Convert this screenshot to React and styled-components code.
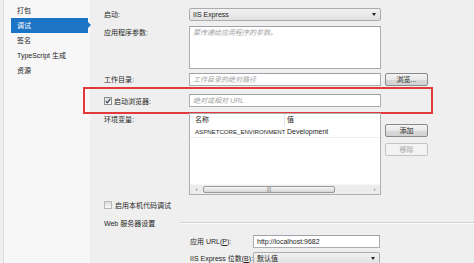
import React from 'react'
import styled, { createGlobalStyle, css } from 'styled-components'

const GlobalStyle = createGlobalStyle`
  html, body {
    margin: 0;
    padding: 0;
  }
  body {
    width: 474px;
    height: 263px;
    overflow: hidden;
    background: #efefef;
    font-family: "Liberation Sans", "Noto Sans CJK SC", sans-serif;
    font-size: 7px;
    color: #1e1e1e;
  }
`

const Window = styled.div`
  display: flex;
  height: 263px;
  background: #efefef;
  overflow: hidden;
`

const Sidebar = styled.nav`
  width: 87px;
  margin-left: 3px;
  box-sizing: border-box;
  border-left: 1px solid #dcdcdc;
  background: #f7f7f7;
  padding-top: 3px;
`

const NavItem = styled.div`
  position: relative;
  height: 15px;
  line-height: 15px;
  width: 77px;
  margin-left: 7px;
  padding-left: 6px;
  box-sizing: border-box;
  white-space: nowrap;
  ${(p) =>
    p.$active &&
    css`
      background: #1c74c6;
      color: #fff;
      &::after {
        content: '';
        position: absolute;
        right: -3px;
        top: 4px;
        border-left: 3px solid #1c74c6;
        border-top: 3px solid transparent;
        border-bottom: 3px solid transparent;
      }
    `}
`

const Main = styled.main`
  flex: 1;
  display: flex;
  flex-direction: column;
  padding: 8px 0 0 14px;
`

const FormRow = styled.div`
  position: relative;
  display: grid;
  grid-template-columns: 85px 192px 47px;
  align-items: start;
  width: 324px;
  margin-top: ${(p) => p.$mt || 0}px;
  ${(p) =>
    p.$marked &&
    css`
      &::after {
        content: '';
        position: absolute;
        left: -21px;
        right: -5px;
        top: -7px;
        bottom: -7px;
        border: 2px solid #e2393c;
        pointer-events: none;
      }
    `}
`

const Label = styled.div`
  line-height: 13px;
  white-space: nowrap;
`

const CheckLabel = styled.label`
  display: flex;
  align-items: center;
  gap: 2px;
  height: 13px;
  white-space: nowrap;
`

const Box = styled.span`
  display: inline-flex;
  align-items: center;
  justify-content: center;
  width: 8px;
  height: 8px;
  box-sizing: border-box;
  border: 1px solid ${(p) => (p.$dim ? '#b8b8b8' : '#8e8f8f')};
  background: linear-gradient(#dcdcdc, #f8f8f8);
`

const Field = styled.div`
  height: ${(p) => p.$h || 13}px;
  box-sizing: border-box;
  border: 1px solid #abadb3;
  border-top-color: #9ea2a8;
  background: #fff;
  padding: 0 3px;
  line-height: 11px;
  white-space: nowrap;
  overflow: hidden;
`

const Hint = styled.span`
  color: #a3a3a3;
  font-style: italic;
`

const Select = styled.div`
  position: relative;
  height: 13px;
  box-sizing: border-box;
  border: 1px solid #acacac;
  border-radius: 2px;
  background: linear-gradient(#f2f2f2, #e0e0e0);
  padding: 0 3px;
  line-height: 11px;
  white-space: nowrap;
  &::after {
    content: '';
    position: absolute;
    right: 4px;
    top: 4px;
    border-top: 3px solid #222;
    border-left: 2px solid transparent;
    border-right: 2px solid transparent;
  }
`

const Button = styled.div`
  height: 13px;
  box-sizing: border-box;
  border: 1px solid ${(p) => (p.$disabled ? '#c2c5c8' : '#8a8a8a')};
  border-radius: 2px;
  background: ${(p) =>
    p.$disabled ? '#f3f3f3' : 'linear-gradient(#f4f4f4 0%, #e8e8e8 50%, #d9d9d9 51%, #d2d2d2 100%)'};
  color: ${(p) => (p.$disabled ? '#a6a6a6' : '#1e1e1e')};
  text-align: center;
  line-height: 11px;
`

const ButtonStack = styled.div`
  display: flex;
  flex-direction: column;
  gap: 6px;
  padding-left: 4px;
  padding-top: ${(p) => p.$top || 0}px;
`

const Table = styled.div`
  height: 82px;
  box-sizing: border-box;
  border: 1px solid #acb0b5;
  background: #fff;
  display: flex;
  flex-direction: column;
`

const TableLine = styled.div`
  display: grid;
  grid-template-columns: 95px 1fr;
  height: ${(p) => p.$h}px;
  line-height: ${(p) => p.$h}px;
  border-bottom: 1px solid ${(p) => (p.$head ? '#ffffff' : '#f0f0f0')};
  white-space: nowrap;
`

const Cell = styled.div`
  padding-left: ${(p) => (p.$first ? 5 : 2)}px;
  border-right: ${(p) => (p.$divider ? '1px solid #e4e4e4' : 'none')};
  font-size: ${(p) => (p.$caps ? 6.1 : 7)}px;
  overflow: hidden;
`

const Scrollbar = styled.div`
  margin-top: auto;
  height: 9px;
  display: flex;
  align-items: center;
  background: #ececec;
  border-top: 1px solid #f6f6f6;
  color: #555;
  font-size: 6px;
`

const Arrow = styled.div`
  width: ${(p) => p.$w}px;
  text-align: center;
  line-height: 9px;
`

const Thumb = styled.div`
  width: 132px;
  height: 7px;
  box-sizing: border-box;
  border: 1px solid #9b9b9b;
  border-radius: 2px;
  background: linear-gradient(#f6f6f6, #d6d6d6);
  display: flex;
  align-items: center;
  justify-content: center;
  font-size: 5px;
  line-height: 5px;
  color: #666;
`

const CheckRow = styled.div`
  display: flex;
  align-items: center;
  gap: 3px;
  height: 10px;
  margin-top: 5px;
  white-space: nowrap;
`

const GroupHeader = styled.div`
  display: grid;
  grid-template-columns: 76px 1fr;
  align-items: center;
  height: 10px;
  margin-top: 8px;
  white-space: nowrap;
`

const Rule = styled.div`
  border-top: 1px solid #d3d3d3;
  border-bottom: 1px solid #fbfbfb;
`

const SubRow = styled.div`
  display: grid;
  grid-template-columns: 63px 127px;
  padding-left: 86px;
  margin-top: ${(p) => p.$mt}px;
`

const Key = styled.u`
  text-decoration: underline;
`

const Check = () => (
  <svg width="6" height="6" viewBox="0 0 6 6">
    <path d="M0.8 3.2 L2.3 4.8 L5.2 0.9" fill="none" stroke="#2a3a4f" strokeWidth="1.1" />
  </svg>
)

const navItems = ['打包', '调试', '签名', 'TypeScript 生成', '资源']

export default function App() {
  return (
    <>
      <GlobalStyle />
      <Window>
        <Sidebar>
          {navItems.map((item) => (
            <NavItem key={item} $active={item === '调试'}>
              {item}
            </NavItem>
          ))}
        </Sidebar>
        <Main>
          <FormRow>
            <Label>启动:</Label>
            <Select>IIS Express</Select>
          </FormRow>
          <FormRow $mt={5}>
            <Label>应用程序参数:</Label>
            <Field $h={43}>
              <Hint>要传递给应用程序的参数。</Hint>
            </Field>
          </FormRow>
          <FormRow $mt={4}>
            <Label>工作目录:</Label>
            <Field>
              <Hint>工作目录的绝对路径</Hint>
            </Field>
            <ButtonStack>
              <Button>浏览...</Button>
            </ButtonStack>
          </FormRow>
          <FormRow $mt={8} $marked>
            <CheckLabel>
              <Box>
                <Check />
              </Box>
              启动浏览器:
            </CheckLabel>
            <Field>
              <Hint>绝对或相对 URL</Hint>
            </Field>
          </FormRow>
          <FormRow $mt={6}>
            <Label>环境变量:</Label>
            <Table>
              <TableLine $h={12} $head>
                <Cell $first $divider>名称</Cell>
                <Cell>值</Cell>
              </TableLine>
              <TableLine $h={10}>
                <Cell $first $caps>ASPNETCORE_ENVIRONMENT</Cell>
                <Cell>Development</Cell>
              </TableLine>
              <Scrollbar>
                <Arrow $w={13}>‹</Arrow>
                <Thumb>|||</Thumb>
                <Arrow $w={34} />
                <Arrow $w={11}>›</Arrow>
              </Scrollbar>
            </Table>
            <ButtonStack $top={11}>
              <Button>添加</Button>
              <Button $disabled>移除</Button>
            </ButtonStack>
          </FormRow>
          <CheckRow>
            <Box $dim />
            启用本机代码调试
          </CheckRow>
          <GroupHeader>
            <span>Web 服务器设置</span>
            <Rule />
          </GroupHeader>
          <SubRow $mt={7}>
            <Label>
              应用 URL(<Key>P</Key>):
            </Label>
            <Field>http://localhost:9682</Field>
          </SubRow>
          <SubRow $mt={4}>
            <Label>
              IIS Express 位数(<Key>B</Key>):
            </Label>
            <Select>默认值</Select>
          </SubRow>
        </Main>
      </Window>
    </>
  )
}
